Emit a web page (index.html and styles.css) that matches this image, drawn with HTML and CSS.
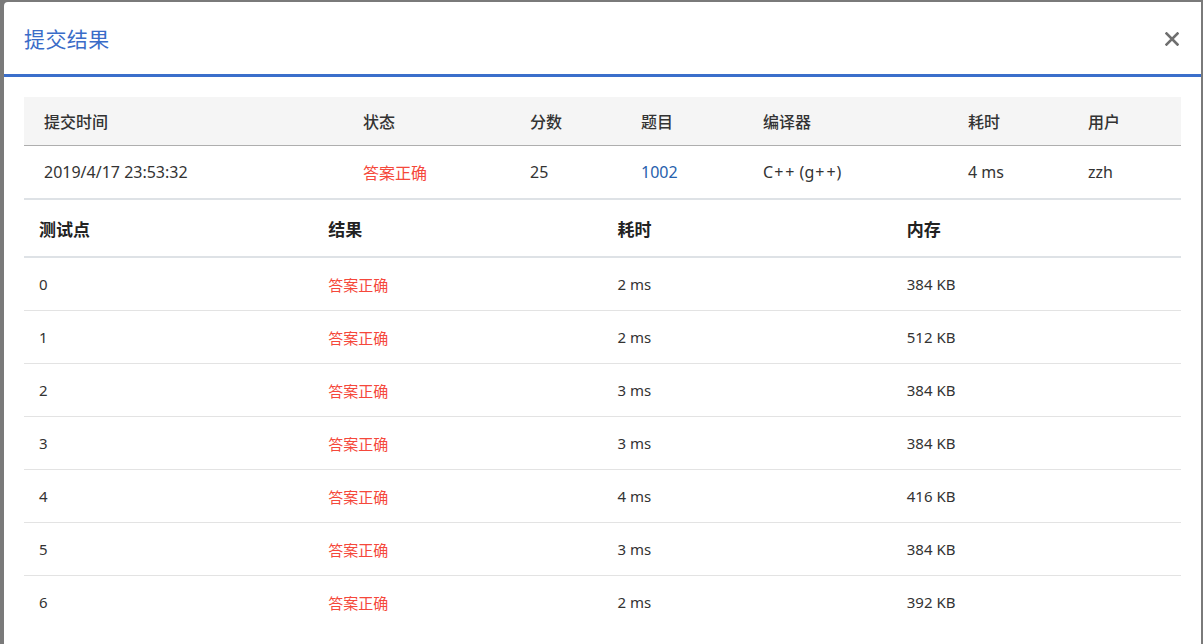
FILE: index.html
```html
<!DOCTYPE html>
<html lang="zh">
<head>
<meta charset="utf-8">
<title>提交结果</title>
<link rel="stylesheet" href="styles.css">
</head>
<body>
<div class="modal">
  <div class="modal-header">
    <h2 class="modal-title">提交结果</h2>
    <button class="close" aria-label="关闭">
      <svg width="14" height="14" viewBox="0 0 14 14"><path d="M1.5 1.5L12.5 12.5M12.5 1.5L1.5 12.5" stroke="#6f6f6f" stroke-width="2.6" stroke-linecap="square"/></svg>
    </button>
  </div>
  <div class="modal-body">
    <table class="summary">
      <colgroup>
        <col class="c1"><col class="c2"><col class="c3"><col class="c4"><col class="c5"><col class="c6"><col class="c7">
      </colgroup>
      <thead>
        <tr><th>提交时间</th><th>状态</th><th>分数</th><th>题目</th><th>编译器</th><th>耗时</th><th>用户</th></tr>
      </thead>
      <tbody>
        <tr><td>2019/4/17 23:53:32</td><td class="ok">答案正确</td><td>25</td><td><a class="link">1002</a></td><td>C<span class="plus">+</span><span class="plus">+</span> (g<span class="plus">+</span><span class="plus">+</span>)</td><td>4 ms</td><td>zzh</td></tr>
      </tbody>
    </table>
    <table class="cases">
      <thead>
        <tr><th>测试点</th><th>结果</th><th>耗时</th><th>内存</th></tr>
      </thead>
      <tbody>
        <tr><td>0</td><td class="ok">答案正确</td><td>2 ms</td><td>384 KB</td></tr>
        <tr><td>1</td><td class="ok">答案正确</td><td>2 ms</td><td>512 KB</td></tr>
        <tr><td>2</td><td class="ok">答案正确</td><td>3 ms</td><td>384 KB</td></tr>
        <tr><td>3</td><td class="ok">答案正确</td><td>3 ms</td><td>384 KB</td></tr>
        <tr><td>4</td><td class="ok">答案正确</td><td>4 ms</td><td>416 KB</td></tr>
        <tr><td>5</td><td class="ok">答案正确</td><td>3 ms</td><td>384 KB</td></tr>
        <tr><td>6</td><td class="ok">答案正确</td><td>2 ms</td><td>392 KB</td></tr>
      </tbody>
    </table>
  </div>
</div>
</body>
</html>
```
FILE: styles.css
```css
html, body {
  margin: 0;
  padding: 0;
  height: 100%;
  overflow: hidden;
}
body {
  background: #7a7a7a;
  font-family: "Noto Sans", "Noto Sans CJK SC", sans-serif;
  color: #333;
}
.modal {
  margin: 2px 0 0 4px;
  width: 1197px;
  height: 642px;
  overflow: hidden;
  background: #fff;
  border-top-left-radius: 4px;
}
.modal-header {
  height: 72px;
  display: flex;
  align-items: center;
  justify-content: space-between;
  padding: 0 22px 0 20px;
  border-bottom: 3px solid #3b6fcb;
}
.modal-title {
  margin: 0;
  font-family: "Noto Sans CJK SC", sans-serif;
  font-weight: 400;
  font-size: 21px;
  color: #3a6cc8;
  letter-spacing: 0.4px;
}
.close {
  background: none;
  border: 0;
  padding: 0;
  display: flex;
  margin-top: 2px;
}
.modal-body {
  padding: 20px 20px 0 20px;
}
table {
  width: 100%;
  border-collapse: collapse;
  table-layout: fixed;
}
.summary {
  font-size: 16px;
}
.summary col.c1 { width: 319px; }
.summary col.c2 { width: 167px; }
.summary col.c3 { width: 111px; }
.summary col.c4 { width: 122px; }
.summary col.c5 { width: 205px; }
.summary col.c6 { width: 120px; }
.summary col.c7 { width: 113px; }
.summary th {
  background: #f5f5f5;
  height: 48px;
  padding: 0 0 0 20px;
  text-align: left;
  font-family: "Noto Sans CJK SC", sans-serif;
  font-weight: 500;
  font-size: 16px;
  color: #333;
  border-bottom: 1px solid #aeaeae;
}
.summary td {
  height: 52px;
  padding: 0 0 0 20px;
  border-bottom: 2px solid #dee2e6;
  color: #333;
}
.plus {
  padding: 0 1px;
}
.link {
  color: #2761ad;
  text-decoration: none;
}
.cases {
  font-size: 15px;
}
.cases th {
  height: 56px;
  padding: 0 0 0 15px;
  text-align: left;
  font-family: "Noto Sans CJK SC", sans-serif;
  font-weight: 700;
  font-size: 17px;
  color: #222;
  border-bottom: 2px solid #dee2e6;
}
.cases td {
  height: 52px;
  padding: 0 0 0 15px;
  border-bottom: 1px solid #e3e3e3;
  color: #333;
}
.cases tr:last-child td {
  border-bottom: 0;
}
.summary td.ok,
.cases td.ok {
  color: #f5483b;
  font-family: "Noto Sans CJK SC", sans-serif;
}
```
